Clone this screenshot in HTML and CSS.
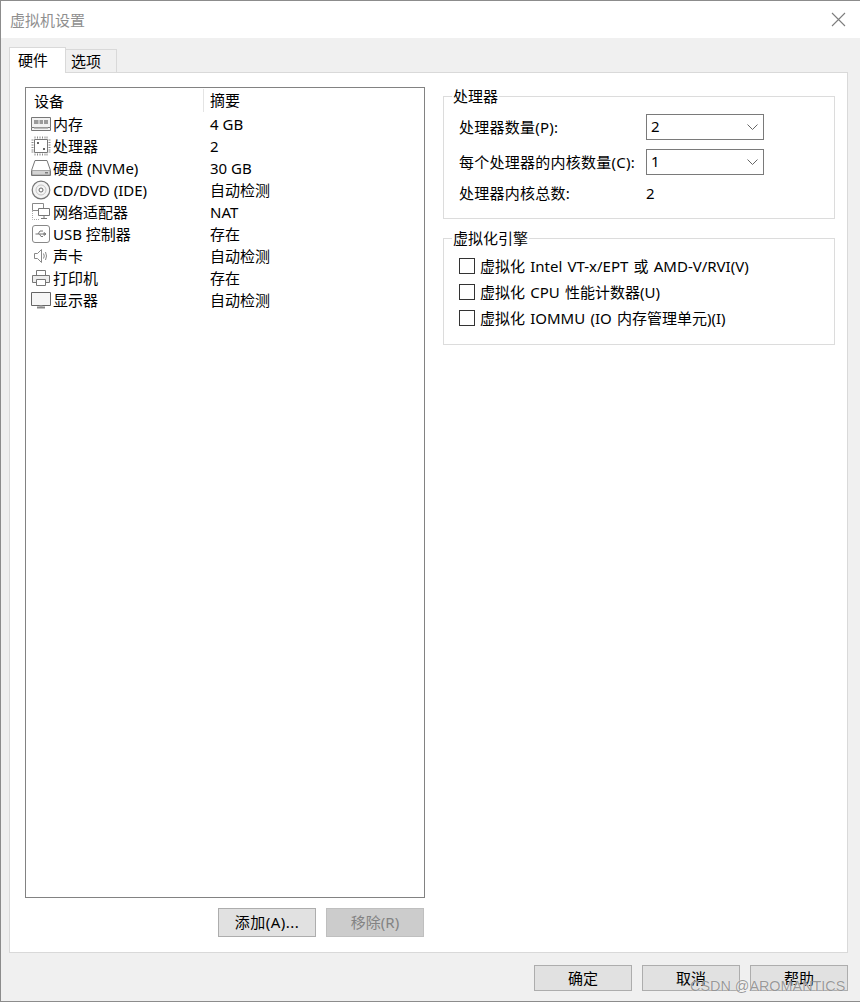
FILE: index.html
```html
<!DOCTYPE html>
<html lang="zh-CN">
<head>
    <meta charset="UTF-8">
    <title>虚拟机设置</title>
    <link rel="stylesheet" href="styles.css">
</head>
<body>
    <div class="window">
        <div class="titlebar">
            <span class="title">虚拟机设置</span>
            <svg class="close" width="15" height="15" viewBox="0 0 15 15"><path d="M1 1L14 14M14 1L1 14" stroke="#7d7d7d" stroke-width="1.1" fill="none"/></svg>
        </div>

        <div class="content">
            <div class="tabs">
                <div class="tab active">硬件</div>
                <div class="tab">选项</div>
            </div>

            <div class="panel">
                <div class="left">
                    <div class="devices">
                        <div class="row head">
                            <div class="col1 head1">设备</div>
                            <div class="col2 head2">摘要</div>
                        </div>
                        <div class="row">
                            <div class="col1">
                                <svg class="icon" viewBox="0 0 20 20"><path d="M0.5 3.5H19.5V13.5H0.5ZM0.5 13.5V16.5H19.5V13.5" fill="#f2f2f2" stroke="#777"/><path d="M3 6H7.5V10H3ZM8.5 6H12V10H8.5ZM13 6H17V10H13Z" fill="#9a9a9a"/><path d="M3 13.5H17V15H3Z" fill="#bbb"/></svg>
                                <span>内存</span>
                            </div>
                            <div class="col2">4 GB</div>
                        </div>
                        <div class="row">
                            <div class="col1">
                                <svg class="icon" viewBox="0 0 20 20"><path d="M3.5 3.5H16.5V16.5H3.5Z" fill="#fff" stroke="#777"/><path d="M4 0.5V2.5M6.5 0.5V2.5M9 0.5V2.5M11.5 0.5V2.5M14 0.5V2.5M16 0.5V2.5M4 17.5V19.5M6.5 17.5V19.5M9 17.5V19.5M11.5 17.5V19.5M14 17.5V19.5M16 17.5V19.5M0.5 4H2.5M0.5 6.5H2.5M0.5 9H2.5M0.5 11.5H2.5M0.5 14H2.5M0.5 16H2.5M17.5 4H19.5M17.5 6.5H19.5M17.5 9H19.5M17.5 11.5H19.5M17.5 14H19.5M17.5 16H19.5" stroke="#8a8a8a" fill="none"/><path d="M6 6H8V8H6ZM12 12H14V14H12Z" fill="#666"/></svg>
                                <span>处理器</span>
                            </div>
                            <div class="col2">2</div>
                        </div>
                        <div class="row">
                            <div class="col1">
                                <svg class="icon" viewBox="0 0 20 20"><path d="M4 2.5H16L19.5 12.5V17.5H0.5V12.5Z" fill="#fff" stroke="#777"/><path d="M1 12.5H19V17H1Z" fill="#d4d4d4" stroke="#777" stroke-width="0.6"/><path d="M14 14.2H17V15.4H14Z" fill="#666"/></svg>
                                <span>硬盘 (NVMe)</span>
                            </div>
                            <div class="col2">30 GB</div>
                        </div>
                        <div class="row">
                            <div class="col1">
                                <svg class="icon" viewBox="0 0 20 20"><circle cx="10" cy="10" r="8.8" fill="#f4f4f4" stroke="#777" stroke-width="1.2"/><circle cx="10" cy="10" r="5" fill="none" stroke="#c4c4c4"/><circle cx="10" cy="10" r="2" fill="#fff" stroke="#666"/></svg>
                                <span>CD/DVD (IDE)</span>
                            </div>
                            <div class="col2">自动检测</div>
                        </div>
                        <div class="row">
                            <div class="col1">
                                <svg class="icon" viewBox="0 0 20 20"><path d="M1.5 1.5H12.5V8.5H1.5Z" fill="#fff" stroke="#8a8a8a"/><path d="M7.5 6.5H18.5V13.5H7.5Z" fill="#fff" stroke="#777"/><path d="M13 13.5V16M10 16.5H16" stroke="#777" fill="none"/><path d="M1.5 9V17.5H8" stroke="#aaa" stroke-dasharray="1 1" fill="none"/></svg>
                                <span>网络适配器</span>
                            </div>
                            <div class="col2">NAT</div>
                        </div>
                        <div class="row">
                            <div class="col1">
                                <svg class="icon" viewBox="0 0 20 20"><rect x="1.5" y="1.5" width="17" height="17" rx="2.5" fill="#fff" stroke="#888"/><path d="M4.5 10H15M15 10L13 8.6V11.4ZM7 10L9 7H12M8.5 10L10 12.5H12" fill="none" stroke="#777"/></svg>
                                <span>USB 控制器</span>
                            </div>
                            <div class="col2">存在</div>
                        </div>
                        <div class="row">
                            <div class="col1">
                                <svg class="icon" viewBox="0 0 20 20"><path d="M3.5 7.5H6.5L10.5 3.5V16.5L6.5 12.5H3.5Z" fill="#fff" stroke="#888"/><path d="M12.5 7.5Q14 10 12.5 12.5M14.5 6Q16.5 10 14.5 14" fill="none" stroke="#888"/></svg>
                                <span>声卡</span>
                            </div>
                            <div class="col2">自动检测</div>
                        </div>
                        <div class="row">
                            <div class="col1">
                                <svg class="icon" viewBox="0 0 20 20"><path d="M5.5 2.5H14.5V7.5H5.5Z" fill="#fff" stroke="#777"/><path d="M1.5 7.5H18.5V14.5H1.5Z" fill="#ededed" stroke="#777"/><path d="M5.5 11.5H14.5V17.5H5.5Z" fill="#fff" stroke="#777"/></svg>
                                <span>打印机</span>
                            </div>
                            <div class="col2">存在</div>
                        </div>
                        <div class="row">
                            <div class="col1">
                                <svg class="icon" viewBox="0 0 20 20"><path d="M0.5 2.5H19.5V15.5H0.5Z" fill="#f6f6f6" stroke="#666"/><path d="M6 17.5H14" stroke="#888" stroke-width="2"/><path d="M8.5 15.5H11.5V17H8.5Z" fill="#aaa"/></svg>
                                <span>显示器</span>
                            </div>
                            <div class="col2">自动检测</div>
                        </div>
                    </div>
                    <div class="left-buttons">
                        <div class="btn wide-text">添加(A)...</div>
                        <div class="btn disabled">移除(R)</div>
                    </div>
                </div>

                <div class="right">
                    <fieldset class="group cpu">
                        <legend>处理器</legend>
                        <div class="field">
                            <span class="label">处理器数量(P):</span>
                            <div class="combo">2<svg width="11" height="6" viewBox="0 0 11 6"><path d="M0.5 0.5L5.5 5.5L10.5 0.5" stroke="#666" fill="none"/></svg></div>
                        </div>
                        <div class="field">
                            <span class="label">每个处理器的内核数量(C):</span>
                            <div class="combo">1<svg width="11" height="6" viewBox="0 0 11 6"><path d="M0.5 0.5L5.5 5.5L10.5 0.5" stroke="#666" fill="none"/></svg></div>
                        </div>
                        <div class="field total">
                            <span class="label">处理器内核总数:</span>
                            <span>2</span>
                        </div>
                    </fieldset>

                    <fieldset class="group engine">
                        <legend>虚拟化引擎</legend>
                        <div class="check"><span class="box"></span><span class="check-text">虚拟化 Intel VT-x/EPT 或 AMD-V/RVI(V)</span></div>
                        <div class="check"><span class="box"></span><span class="check-text">虚拟化 CPU 性能计数器(U)</span></div>
                        <div class="check"><span class="box"></span><span class="check-text">虚拟化 IOMMU (IO 内存管理单元)(I)</span></div>
                    </fieldset>
                </div>
            </div>

            <div class="footer">
                <div class="btn">确定</div>
                <div class="btn">取消</div>
                <div class="btn">帮助</div>
            </div>
        </div>
        <div class="watermark">CSDN @AROMANTICS</div>
    </div>
</body>
</html>
```

FILE: styles.css
```css
*{
    margin: 0;
    padding: 0;
    box-sizing: border-box;
}
html, body{
    width: 860px;
    height: 1002px;
    overflow: hidden;
}
body{
    background-color: #f0f0f0;
    font-family: "Noto Sans", "Noto Sans CJK SC", sans-serif;
    font-size: 15px;
    color: #000;
}
.window{
    position: relative;
    width: 860px;
    height: 1002px;
    border-top: 1px solid #8c8c8c;
    border-left: 1px solid #8c8c8c;
    border-bottom: 1px solid #8c8c8c;
    display: flex;
    flex-direction: column;
}
.titlebar{
    height: 37px;
    background-color: #fff;
    display: flex;
    align-items: center;
    justify-content: space-between;
    padding: 0 14px 0 9px;
}
.title{
    color: #8f8f8f;
}
.content{
    flex: 1;
    padding: 8px 12px 0 8px;
    display: flex;
    flex-direction: column;
}
.tabs{
    display: flex;
    align-items: flex-end;
    height: 26px;
    position: relative;
    z-index: 1;
}
.tab{
    width: 51px;
    height: 23px;
    background-color: #f0f0f0;
    border: 1px solid #d9d9d9;
    border-left: none;
    border-bottom: none;
    line-height: 23px;
    padding-left: 5px;
}
.tab.active{
    width: 57px;
    height: 26px;
    line-height: 24px;
    background-color: #fff;
    border-left: 1px solid #d9d9d9;
    padding-left: 8px;
    margin-bottom: -1px;
}
.panel{
    height: 881px;
    background-color: #fff;
    border: 1px solid #d9d9d9;
    padding: 14px 12px 0 15px;
    display: flex;
    gap: 18px;
}
.left{
    width: 400px;
}
.devices{
    height: 811px;
    border: 1px solid #828282;
    padding-top: 1px;
}
.row{
    display: flex;
    height: 22px;
    line-height: 22px;
}
.row.head{
    height: 24px;
}
.col1{
    width: 177px;
    padding-left: 5px;
    display: flex;
    align-items: center;
    gap: 2px;
    white-space: nowrap;
}
.col2{
    padding-left: 7px;
}
.head1{
    padding-left: 8px;
}
.head2{
    border-left: 1px solid #e4e4e4;
    padding-left: 6px;
    height: 23px;
}
.icon{
    width: 20px;
    height: 20px;
    flex: none;
}
.left-buttons{
    display: flex;
    justify-content: flex-end;
    gap: 10px;
    margin-top: 10px;
    padding-right: 1px;
}
.btn{
    width: 98px;
    height: 29px;
    line-height: 26px;
    text-align: center;
    background-color: #e1e1e1;
    border: 1px solid #adadad;
}
.btn.disabled{
    background-color: #cccccc;
    border-color: #bfbfbf;
    color: #838383;
}
.wide-text{
    letter-spacing: 0.5px;
}
.right{
    width: 392px;
    display: flex;
    flex-direction: column;
    gap: 9px;
    margin-top: -1px;
}
.group{
    border: 1px solid #dcdcdc;
    padding: 0 15px;
}
.group legend{
    margin-left: -7px;
    padding: 0 1px;
    line-height: 20px;
}
.group.cpu{
    height: 133px;
    padding-top: 8px;
}
.group.engine{
    height: 117px;
    padding-top: 5px;
}
.field{
    display: flex;
    align-items: center;
    height: 26px;
    margin-bottom: 9px;
}
.label{
    width: 187px;
    flex: none;
    white-space: nowrap;
    letter-spacing: 0.25px;
    margin-top: -2px;
}
.combo{
    width: 118px;
    height: 26px;
    border: 1px solid #7a7a7a;
    line-height: 24px;
    padding: 0 5px 2px 4px;
    display: flex;
    align-items: center;
    justify-content: space-between;
}
.combo svg{
    margin-top: 2px;
}
.field.total{
    height: 20px;
    margin: -1px 0 0;
}
.check{
    display: flex;
    align-items: center;
    height: 26px;
    white-space: pre;
}
.check-text{
    margin-top: -2px;
    word-spacing: 1.3px;
}
.box{
    width: 16px;
    height: 16px;
    background-color: #fff;
    border: 1px solid #333;
    margin-right: 5px;
    flex: none;
}
.footer{
    display: flex;
    justify-content: flex-end;
    gap: 10px;
    margin-top: 12px;
}
.footer .btn{
    height: 26px;
    line-height: 24px;
}
.watermark{
    position: absolute;
    left: 689px;
    top: 976px;
    font-family: "Liberation Sans", sans-serif;
    font-size: 14.4px;
    line-height: 18px;
    color: rgba(120, 120, 120, 0.75);
    text-shadow: 0 0 1px #fff;
    white-space: nowrap;
}
```
